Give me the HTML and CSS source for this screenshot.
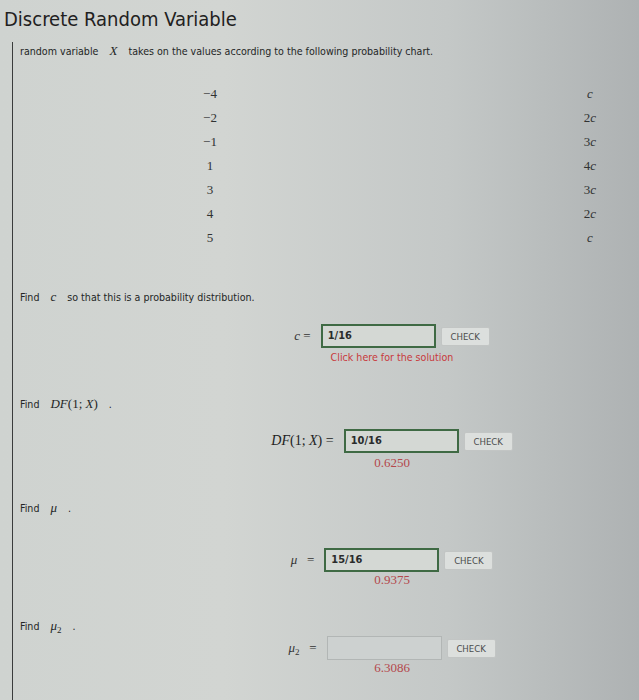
FILE: index.html
```html
<!DOCTYPE html>
<html>
<head>
<meta charset="utf-8">
<link rel="stylesheet" href="styles.css">
</head>
<body>
<h1 class="title">Discrete Random Variable</h1>
<div class="main">
  <p class="intro">random variable <span class="m mi">X</span> takes on the values according to the following probability chart.</p>
  <div class="chart">
    <span class="xv">−4</span><span class="pv mi">c</span>
    <span class="xv">−2</span><span class="pv">2<i>c</i></span>
    <span class="xv">−1</span><span class="pv">3<i>c</i></span>
    <span class="xv">1</span><span class="pv">4<i>c</i></span>
    <span class="xv">3</span><span class="pv">3<i>c</i></span>
    <span class="xv">4</span><span class="pv">2<i>c</i></span>
    <span class="xv">5</span><span class="pv mi">c</span>
  </div>

  <p class="q q1">Find <span class="m mi">c</span> so that this is a probability distribution.</p>
  <div class="answer a1">
    <div class="row">
      <span class="lbl"><i>c</i> =</span>
      <span class="box filled">1/16</span>
      <span class="btn">CHECK</span>
    </div>
    <span class="link">Click here for the solution</span>
  </div>

  <p class="q q2">Find <span class="m"><i>DF</i>(1; <i>X</i>)</span> .</p>
  <div class="answer a2">
    <div class="row">
      <span class="lbl lbl-big"><i>DF</i>(1; <i>X</i>) =</span>
      <span class="box filled">10/16</span>
      <span class="btn">CHECK</span>
    </div>
    <span class="num">0.6250</span>
  </div>

  <p class="q q3">Find <span class="m mi">μ</span> .</p>
  <div class="answer a3">
    <div class="row">
      <span class="lbl"><i>μ</i>&nbsp;&nbsp;&nbsp;=</span>
      <span class="box filled">15/16</span>
      <span class="btn">CHECK</span>
    </div>
    <span class="num">0.9375</span>
  </div>

  <p class="q q4">Find <span class="m"><i>μ</i><sub>2</sub></span> .</p>
  <div class="answer a4">
    <div class="row">
      <span class="lbl"><i>μ</i><sub>2</sub>&nbsp;&nbsp;&nbsp;=</span>
      <span class="box empty"></span>
      <span class="btn">CHECK</span>
    </div>
    <span class="num">6.3086</span>
  </div>
</div>
</body>
</html>
```

FILE: styles.css
```css
html, body {
  margin: 0;
  padding: 0;
}
body {
  width: 639px;
  height: 700px;
  overflow: hidden;
  background: linear-gradient(90deg, #cfd3d0 0%, #d2d5d2 35%, #c4c8c7 70%, #aeb2b3 100%);
  font-family: "DejaVu Sans Condensed", "DejaVu Sans", Verdana, sans-serif;
  color: #242626;
}
.title {
  margin: 0;
  padding: 7px 0 0 4px;
  height: 42px;
  box-sizing: border-box;
  font-size: 20px;
  font-weight: normal;
  line-height: 24px;
  color: #1f2121;
}
.main {
  margin-left: 12px;
  border-left: 1px solid #3a3c3c;
  padding-left: 7px;
  padding-top: 3px;
  height: 658px;
  box-sizing: border-box;
}
.intro, .q {
  margin: 0;
  font-size: 10.6px;
  line-height: 12px;
  height: 12px;
  white-space: nowrap;
}
.m {
  font-family: "Liberation Serif", "Times New Roman", serif;
  font-size: 13px;
  margin: 0 8px;
}
.mi {
  font-style: italic;
}
.m sub, .lbl sub {
  font-size: 9px;
  font-style: normal;
  vertical-align: -3px;
  line-height: 0;
}
.chart {
  margin-top: 25px;
  display: grid;
  grid-template-columns: 150px 80px 300px 80px;
  grid-auto-rows: 24px;
  font-family: "Liberation Serif", "Times New Roman", serif;
  font-size: 13px;
  color: #303232;
}
.xv {
  grid-column: 2;
  text-align: center;
  line-height: 24px;
}
.pv {
  grid-column: 4;
  text-align: center;
  line-height: 24px;
}
.q1 { margin-top: 41px; }
.q2 { margin-top: 35px; }
.q3 { margin-top: 32px; }
.q4 { margin-top: 33px; }

.answer {
  margin-left: 122px;
  width: 500px;
  display: flex;
  flex-direction: column;
  align-items: center;
}
.a1 { margin-top: 21px; }
.a2 { margin-top: 19px; }
.a3 { margin-top: 34px; }
.a4 { margin-top: 4px; }

.row {
  display: flex;
  align-items: center;
  height: 24px;
}
.lbl {
  font-family: "Liberation Serif", "Times New Roman", serif;
  font-size: 13px;
  color: #333;
  margin-right: 10px;
  white-space: nowrap;
}
.lbl-big {
  font-size: 14px;
  color: #222;
}
.box {
  width: 115px;
  height: 24px;
  box-sizing: border-box;
  font-size: 11px;
  font-weight: bold;
  line-height: 20px;
  padding-left: 5px;
  color: #2a2c2c;
}
.filled {
  border: 2px solid #3f6a44;
  background: #d4d8d4;
}
.empty {
  border: 1px solid #b2b6b5;
  background: #cdd1d0;
}
.btn {
  margin-left: 5px;
  width: 49px;
  height: 19px;
  box-sizing: border-box;
  border: 1px solid #c2c5c4;
  border-radius: 2px;
  background: #dcdfdd;
  font-size: 9.5px;
  line-height: 17px;
  text-align: center;
  color: #4a4c4c;
}
.link {
  margin-top: 3px;
  font-size: 10.6px;
  line-height: 12px;
  color: #c8393c;
}
.num {
  font-family: "Liberation Serif", "Times New Roman", serif;
  font-size: 13px;
  line-height: 14px;
  color: #b4484c;
  margin-top: 3px;
}
.a3 .num { margin-top: 1px; }
.a4 .num { margin-top: 1px; }
```
